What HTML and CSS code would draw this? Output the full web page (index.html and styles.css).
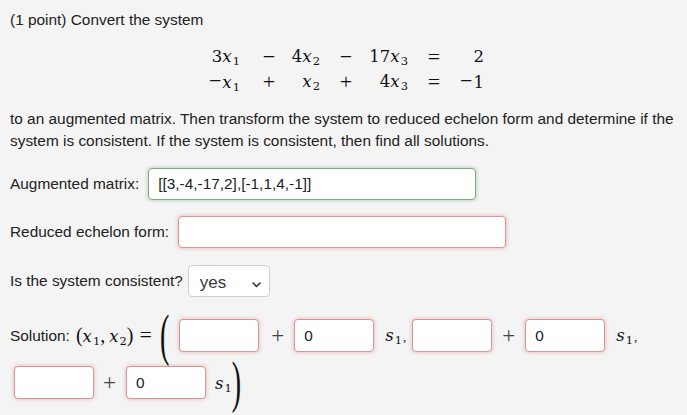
FILE: index.html
```html
<!DOCTYPE html>
<html lang="en">
<head>
<meta charset="utf-8">
<title>Augmented matrix problem</title>
<link rel="stylesheet" href="styles.css">
</head>
<body>
<div class="problem">
  <p class="intro">(1 point) Convert the system</p>

  <div class="system">
    <span class="cell c1">3<i>x</i><sub>1</sub></span>
    <span class="cell op">−</span>
    <span class="cell c3">4<i>x</i><sub>2</sub></span>
    <span class="cell op">−</span>
    <span class="cell c5">17<i>x</i><sub>3</sub></span>
    <span class="cell op">=</span>
    <span class="cell c7">2</span>

    <span class="cell c1"><span class="neg">−</span><i>x</i><sub>1</sub></span>
    <span class="cell op">+</span>
    <span class="cell c3"><i>x</i><sub>2</sub></span>
    <span class="cell op">+</span>
    <span class="cell c5">4<i>x</i><sub>3</sub></span>
    <span class="cell op">=</span>
    <span class="cell c7"><span class="neg">−</span>1</span>
  </div>

  <p class="text">to an augmented matrix. Then transform the system to reduced echelon form and determine if the system is consistent. If the system is consistent, then find all solutions.</p>

  <div class="field">
    <label class="lbl" for="aug">Augmented matrix:</label>
    <input id="aug" class="ans wide ok" type="text" value="[[3,-4,-17,2],[-1,1,4,-1]]">
  </div>

  <div class="field">
    <label class="lbl" for="ref">Reduced echelon form:</label>
    <input id="ref" class="ans wide bad" type="text" value="">
  </div>

  <div class="field field-select">
    <label class="lbl lbl-tight" for="cons">Is the system consistent?</label>
    <span class="select-wrap">
      <select id="cons" class="choice">
        <option>yes</option>
        <option>no</option>
      </select>
      <svg class="chev" width="9" height="6" viewBox="0 0 9 6" aria-hidden="true"><path d="M1 1 L4.5 4.5 L8 1" fill="none" stroke="#333" stroke-width="1.6" stroke-linecap="round" stroke-linejoin="round"/></svg>
    </span>
  </div>

  <div class="sol-line first">
    <span class="lbl">Solution:</span>
    <span class="math pair">(<i>x</i><sub>1</sub>,<span class="thin"></span><i>x</i><sub>2</sub>)<span class="eq">=</span></span>
    <span class="paren">(</span>
    <input class="ans small bad" type="text" value="">
    <span class="math plus">+</span>
    <input class="ans small bad" type="text" value="0">
    <span class="math svar"><i>s</i><sub>1</sub><span class="comma">,</span></span>
    <input class="ans small bad" type="text" value="">
    <span class="math plus">+</span>
    <input class="ans small bad" type="text" value="0">
    <span class="math svar"><i>s</i><sub>1</sub><span class="comma">,</span></span>
  </div>
  <div class="sol-line second">
    <input class="ans small bad" type="text" value="">
    <span class="math plus">+</span>
    <input class="ans small bad" type="text" value="0">
    <span class="math svar"><i>s</i><sub>1</sub></span>
    <span class="paren close">)</span>
  </div>
</div>
</body>
</html>
```

FILE: styles.css
```css
html, body {
  margin: 0;
}

body {
  background: #f4f4f4;
  color: #222;
  font-family: "Liberation Sans", Arial, sans-serif;
  font-size: 15.4px;
  line-height: 22px;
  padding: 9px 10px;
}

.intro {
  margin: 0;
}

/* equation array */
.system {
  display: grid;
  grid-template-columns: 68px 30px 47px 30px 58px 30px 35px;
  grid-auto-rows: 25px;
  align-items: center;
  width: max-content;
  margin: 13px 0 0 176px;
  font-family: "DejaVu Serif", "Liberation Serif", serif;
  font-size: 16.5px;
  color: #111;
}

.cell {
  white-space: nowrap;
  line-height: 25px;
}

.c1 { text-align: right; padding-right: 14px; }
.c3 { text-align: right; padding-right: 11px; }
.c5 { text-align: right; padding-right: 11px; }
.c7 { text-align: right; }

.op {
  text-align: center;
  font-family: "Liberation Serif", "Times New Roman", serif;
  font-size: 22px;
}

.neg {
  font-family: "Liberation Serif", "Times New Roman", serif;
  font-size: 22px;
  margin-right: 1px;
}

.system i,
.math i {
  font-family: "DejaVu Serif", "Liberation Serif", serif;
  font-style: italic;
  font-size: 16.5px;
  padding-right: 1px;
}

.system sub,
.math sub {
  font-family: "DejaVu Serif", "Liberation Serif", serif;
  font-size: 11.5px;
  line-height: 0;
  vertical-align: -0.3em;
}

.text {
  margin: 14px 0 0;
}

/* fields */
.field {
  display: flex;
  align-items: center;
  margin-top: 16px;
}

.field-select {
  margin-top: 17px;
}

.lbl {
  margin-right: 9px;
}

.lbl-tight {
  margin-right: 5px;
}

.ans {
  box-sizing: border-box;
  height: 32px;
  margin: 0;
  border-radius: 4px;
  background: #fff;
  color: #222;
  font-family: "Liberation Sans", Arial, sans-serif;
  font-size: 15.4px;
  padding: 0 9px;
  outline: none;
}

.wide {
  width: 328px;
}

.small {
  width: 80px;
  height: 33px;
}

.ok {
  border: 1px solid #86a882;
  box-shadow: 0 0 4px rgba(70, 150, 70, 0.45);
}

.bad {
  border: 1px solid #d89595;
  box-shadow: 0 0 4px rgba(215, 70, 70, 0.38);
}

/* select */
.select-wrap {
  position: relative;
  display: inline-block;
  height: 32px;
}

.choice {
  appearance: none;
  -webkit-appearance: none;
  box-sizing: border-box;
  width: 82px;
  height: 32px;
  margin: 0;
  padding: 3px 0 0 11px;
  border: 1px solid #cfcfcf;
  border-radius: 4px;
  background: #fff;
  color: #3a3a3a;
  font-family: "Liberation Sans", Arial, sans-serif;
  font-size: 17px;
}

.chev {
  position: absolute;
  right: 9px;
  top: 17px;
  pointer-events: none;
}

/* solution rows */
.sol-line {
  display: flex;
  align-items: center;
  height: 47px;
}

.sol-line.first {
  margin-top: 15px;
}

.sol-line.second {
  padding-left: 4px;
}

.math {
  font-family: "Liberation Serif", "Times New Roman", serif;
  font-size: 20px;
  color: #111;
  white-space: nowrap;
}

.pair {
  margin-left: -3px;
}

.thin {
  display: inline-block;
  width: 4px;
}

.eq {
  margin-left: 6px;
  font-size: 22px;
}

.paren {
  display: inline-block;
  font-family: "Liberation Serif", "Times New Roman", serif;
  font-size: 28px;
  line-height: 28px;
  color: #111;
  transform: scale(1, 2.05);
  margin: 0 10px 0 8px;
}

.paren.close {
  margin: 0 0 0 0;
}

.plus {
  color: #444;
  font-size: 23px;
  margin: 0 10px 0 12px;
}

.svar {
  margin: 0 6px 0 11px;
}

.first .svar + .ans + .plus {
  margin-left: 10px;
}

.comma {
  font-size: 13px;
  margin-left: 1px;
}

.second .plus {
  margin: 0 10px 0 9px;
}

.second .svar {
  margin: 0 0 0 9px;
}
```
